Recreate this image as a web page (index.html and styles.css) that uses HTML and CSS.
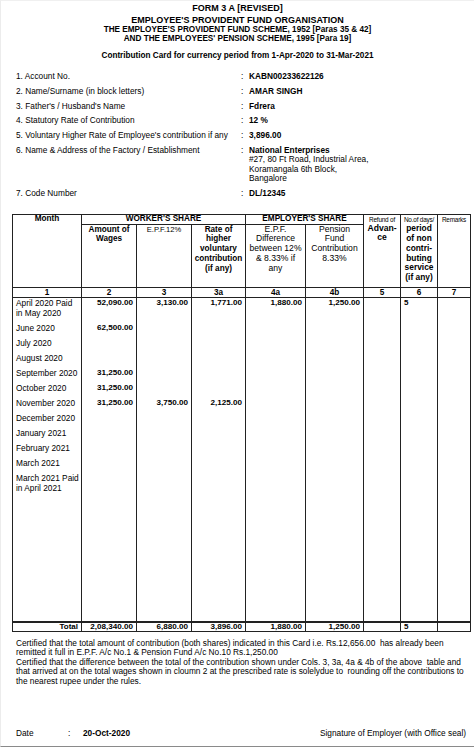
FILE: index.html
```html
<!DOCTYPE html>
<html>
<head>
<meta charset="utf-8">
<link rel="stylesheet" href="styles.css">
</head>
<body>
<div class="page">
  <div class="head">
    <div class="t1">FORM 3 A [REVISED]</div>
    <div class="t2">EMPLOYEE'S PROVIDENT FUND ORGANISATION</div>
    <div class="t3">THE EMPLOYEE'S PROVIDENT FUND SCHEME, 1952 [Paras 35 &amp; 42]</div>
    <div class="t3">AND THE EMPLOYEES' PENSION SCHEME, 1995 [Para 19]</div>
    <div class="t4">Contribution Card for currency period from 1-Apr-2020 to 31-Mar-2021</div>
  </div>

  <div class="info">
    <div class="lbl">1. Account No.</div><div class="col">:</div><div class="val">KABN00233622126</div>
    <div class="lbl">2. Name/Surname (in block letters)</div><div class="col">:</div><div class="val">AMAR SINGH</div>
    <div class="lbl">3. Father's / Husband's Name</div><div class="col">:</div><div class="val">Fdrera</div>
    <div class="lbl">4. Statutory Rate of Contribution</div><div class="col">:</div><div class="val">12 %</div>
    <div class="lbl">5. Voluntary Higher Rate of Employee's contribution if any</div><div class="col">:</div><div class="val">3,896.00</div>
    <div class="lbl">6. Name &amp; Address of the Factory / Establishment</div><div class="col">:</div><div class="val"><b>National Enterprises</b><span class="addr">#27, 80 Ft Road, Industrial Area,<br>Koramangala 6th Block,<br>Bangalore</span></div>
    <div class="lbl">7. Code Number</div><div class="col">:</div><div class="val">DL/12345</div>
  </div>

  <table class="card">
    <colgroup>
      <col class="w-month"><col class="w-amt"><col class="w-epf"><col class="w-rate"><col class="w-diff"><col class="w-pen"><col class="w-ref"><col class="w-days"><col class="w-rem">
    </colgroup>
    <thead>
      <tr class="h1">
        <th rowspan="2">Month</th>
        <th colspan="3">WORKER'S SHARE</th>
        <th colspan="2">EMPLOYER'S SHARE</th>
        <th rowspan="2" class="refund"><span class="tiny">Refund of</span><span class="big">Advan-<br>ce</span></th>
        <th rowspan="2" class="days"><span class="tiny">No.of days/</span><span class="big">period<br>of non<br>contri-<br>buting<br>service<br>(if any)</span></th>
        <th rowspan="2" class="rem"><span class="tiny">Remarks</span></th>
      </tr>
      <tr class="h2">
        <th>Amount of<br>Wages</th>
        <th class="epf">E.P.F.12%</th>
        <th>Rate of<br>higher<br>voluntary<br>contribution<br>(if any)</th>
        <th class="reg">E.P.F.<br>Difference<br>between 12%<br>&amp; 8.33% if<br>any</th>
        <th class="reg">Pension<br>Fund<br>Contribution<br>8.33%</th>
      </tr>
      <tr class="nums">
        <th>1</th><th>2</th><th>3</th><th>3a</th><th>4a</th><th>4b</th><th>5</th><th>6</th><th>7</th>
      </tr>
    </thead>
    <tbody>
      <tr><td>April 2020 Paid<br>in May 2020</td><td class="num">52,090.00</td><td class="num">3,130.00</td><td class="num">1,771.00</td><td class="num">1,880.00</td><td class="num">1,250.00</td><td></td><td class="day">5</td><td></td></tr>
      <tr><td>June 2020</td><td class="num">62,500.00</td><td></td><td></td><td></td><td></td><td></td><td></td><td></td></tr>
      <tr><td>July 2020</td><td></td><td></td><td></td><td></td><td></td><td></td><td></td><td></td></tr>
      <tr><td>August 2020</td><td></td><td></td><td></td><td></td><td></td><td></td><td></td><td></td></tr>
      <tr><td>September 2020</td><td class="num">31,250.00</td><td></td><td></td><td></td><td></td><td></td><td></td><td></td></tr>
      <tr><td>October 2020</td><td class="num">31,250.00</td><td></td><td></td><td></td><td></td><td></td><td></td><td></td></tr>
      <tr><td>November 2020</td><td class="num">31,250.00</td><td class="num">3,750.00</td><td class="num">2,125.00</td><td></td><td></td><td></td><td></td><td></td></tr>
      <tr><td>December 2020</td><td></td><td></td><td></td><td></td><td></td><td></td><td></td><td></td></tr>
      <tr><td>January 2021</td><td></td><td></td><td></td><td></td><td></td><td></td><td></td><td></td></tr>
      <tr><td>February 2021</td><td></td><td></td><td></td><td></td><td></td><td></td><td></td><td></td></tr>
      <tr><td>March 2021</td><td></td><td></td><td></td><td></td><td></td><td></td><td></td><td></td></tr>
      <tr><td>March 2021 Paid<br>in April 2021</td><td></td><td></td><td></td><td></td><td></td><td></td><td></td><td></td></tr>
      <tr class="filler"><td></td><td></td><td></td><td></td><td></td><td></td><td></td><td></td><td></td></tr>
    </tbody>
    <tfoot>
      <tr class="total"><td class="tl">Total</td><td class="num">2,08,340.00</td><td class="num">6,880.00</td><td class="num">3,896.00</td><td class="num">1,880.00</td><td class="num">1,250.00</td><td></td><td class="day">5</td><td></td></tr>
    </tfoot>
  </table>

  <div class="cert">
    Certified that the total amount of contribution (both shares) indicated in this Card i.e. Rs.12,656.00&nbsp; has already been<br>
    remitted it full in E.P.F. A/c No.1 &amp; Pension Fund A/c No.10 Rs.1,250.00<br>
    Certified that the difference between the total of the contribution shown under Cols. 3, 3a, 4a &amp; 4b of the above&nbsp; table and<br>
    that arrived at on the total wages shown in cloumn 2 at the prescribed rate is solelydue to&nbsp; rounding off the contributions to<br>
    the nearest rupee under the rules.
  </div>

  <div class="sign">
    <span class="d-lbl">Date</span><span class="d-col">:</span><span class="d-val">20-Oct-2020</span><span class="d-sig">Signature of Employer (with Office seal)</span>
  </div>
</div>
</body>
</html>
```

FILE: styles.css
```css
html, body {
  margin: 0;
  padding: 0;
  background: #fff;
}
body {
  font-family: "Liberation Sans", Arial, sans-serif;
  color: #000;
}
.page {
  width: 474px;
  height: 747px;
  box-sizing: border-box;
  display: flex;
  flex-direction: column;
  border-left: 1px solid #ececec;
  border-top: 1px solid #f0f0f0;
  border-bottom: 1px solid #8a8a8a;
  padding-top: 1.5px;
  padding-bottom: 8px;
  overflow: hidden;
}

/* heading */
.head {
  text-align: center;
  font-weight: bold;
}
.t1 {
  font-size: 9px;
  line-height: 10px;
  margin-bottom: 3.5px;
}
.t2 {
  font-size: 9px;
  line-height: 9px;
}
.t3 {
  font-size: 8.2px;
  line-height: 9px;
}
.t4 {
  font-size: 8.2px;
  line-height: 9px;
  margin-top: 8px;
}

/* info */
.info {
  display: grid;
  grid-template-columns: 225px 8px 1fr;
  row-gap: 5.3px;
  padding-left: 15px;
  margin-top: 12px;
  font-size: 8.3px;
  line-height: 9.5px;
}
.val {
  font-weight: bold;
}
.addr {
  display: block;
  font-weight: normal;
  line-height: 9.3px;
}

/* table */
.card {
  border-collapse: collapse;
  table-layout: fixed;
  width: 458px;
  margin: 16px 0 0 11px;
  flex: none;
}
.w-month { width: 69px; }
.w-amt { width: 55px; }
.w-epf { width: 55px; }
.w-rate { width: 54px; }
.w-diff { width: 60px; }
.w-pen { width: 58px; }
.w-ref { width: 37px; }
.w-days { width: 37px; }
.w-rem { width: 33px; }

.card th, .card td {
  border: 1px solid #222;
  padding: 0;
}
.card th {
  font-size: 8.2px;
  line-height: 9.8px;
  font-weight: bold;
  text-align: center;
  vertical-align: top;
  overflow: visible;
  white-space: nowrap;
}
.h1 { height: 9px; }
.h1 th { line-height: 8.5px; }
.h2 { height: 63px; }
.card th.reg {
  font-weight: normal;
  font-size: 8.6px;
}
.card th.epf {
  font-weight: normal;
  font-size: 7.6px;
}
.tiny {
  display: block;
  font-weight: normal;
  font-size: 6.4px;
  line-height: 9px;
  letter-spacing: -0.2px;
}
.refund .big {
  display: block;
  font-size: 8.6px;
  line-height: 9px;
}
.days .big {
  display: block;
  font-size: 8.4px;
  line-height: 9.8px;
}
.nums { height: 10px; }
.nums th { line-height: 9px; }

.card tbody td {
  border-top: none;
  border-bottom: none;
  font-size: 8.3px;
  line-height: 10px;
  padding: 0 3px 5px;
  vertical-align: top;
  white-space: nowrap;
}
.card td.num {
  text-align: right;
  font-weight: bold;
  font-size: 8.1px;
}
.card td.day {
  text-align: left;
  font-weight: bold;
  font-size: 8px;
  padding-left: 3px;
}
.card tbody tr.filler td {
  height: 123px;
  padding: 0;
}
.total td {
  border-top: 2px solid #222;
  font-size: 8px;
  font-weight: bold;
  line-height: 8px;
  height: 8px;
  padding: 0 3px;
  vertical-align: middle;
}
.total td.tl { text-align: right; }

/* certification */
.cert {
  margin-top: 7px;
  padding-left: 15px;
  font-size: 8.3px;
  line-height: 9.5px;
  white-space: nowrap;
}
.sign {
  display: flex;
  margin-top: auto;
  padding-left: 15px;
  padding-right: 8px;
  font-size: 8.3px;
  line-height: 10px;
}
.d-lbl { width: 52px; }
.d-col { width: 15px; }
.d-val { font-weight: bold; }
.d-sig { margin-left: auto; }
```
